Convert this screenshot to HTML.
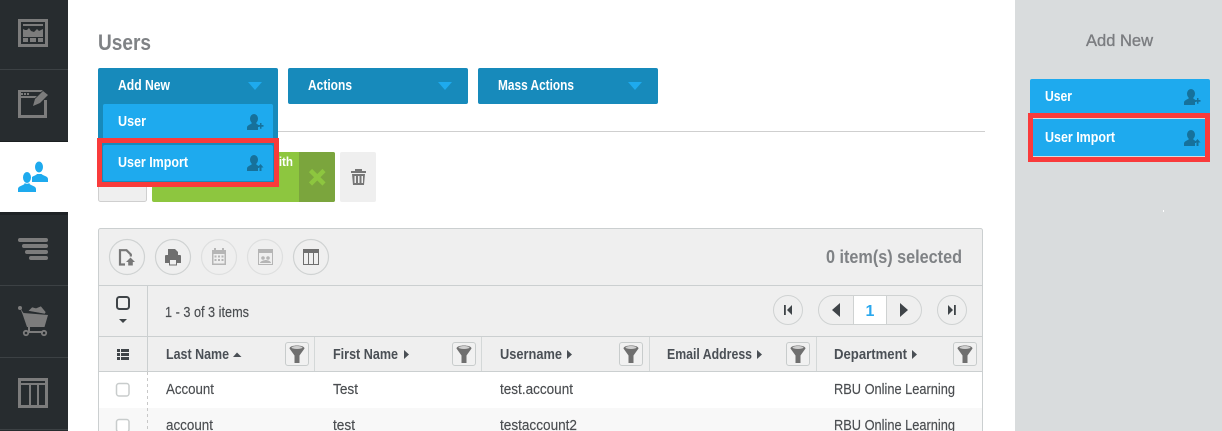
<!DOCTYPE html>
<html><head><meta charset="utf-8"><title>Users</title>
<style>
html,body{margin:0;padding:0;width:1222px;height:431px;overflow:hidden;background:#fff}
svg{display:block}
text{font-family:"Liberation Sans",sans-serif}
.b{font-weight:bold}
.w{fill:#fff;font-weight:bold;font-size:15px}
.h{fill:#4a4f55;font-weight:bold;font-size:14.5px}
.c{fill:#4a4d50;font-size:14.5px;stroke:#4a4d50;stroke-width:.15px}
</style></head><body>
<svg width="1222" height="431" viewBox="0 0 1222 431" xmlns="http://www.w3.org/2000/svg">
<defs>
<g id="p"><ellipse cx="7" cy="4.800" rx="4" ry="4.800"/><path d="M0 16v-2.500c0-2.500 4-3 5-4.500h4c.6 1 2 1.600 3 2.200v1.800h-1v3z"/></g>
<g id="f"><rect x=".5" y=".5" width="23" height="23" rx="2.500" fill="#f1f1f1" stroke="#c8cccc"/><path d="M4.500 6.500c0-4 15-4 15 0l-5 7v7.500h-5v-7.500z" fill="#6f6f6f"/><ellipse cx="12" cy="5.500" rx="5.500" ry="1.500" fill="#cfcfcf"/></g>
</defs>

<!-- sidebar -->
<rect width="68" height="431" fill="#272c2f"/>
<rect y="69" width="68" height="1" fill="#3c4144"/><rect y="141" width="68" height="1" fill="#1b1f21"/>
<rect y="142" width="68" height="70" fill="#fff"/>
<rect y="212" width="68" height="3" fill="#1f2326"/>
<rect y="285" width="68" height="1" fill="#3c4144"/><rect y="357" width="68" height="1" fill="#3c4144"/><rect y="429" width="68" height="1" fill="#3c4144"/>
<g fill="#7c7c7c">
<path fill-rule="evenodd" d="M18 19h30v28H18zM21 22v22h24V22z"/>
<rect x="23" y="24" width="20" height="2"/>
<path d="M23 37v-8l2 1 2 0 2-2 2 3 3 1 3-3 2 2 2-1 2-1v8z"/>
<rect x="23" y="38" width="5" height="4"/><rect x="30" y="38" width="6" height="4"/><rect x="38" y="38" width="5" height="4"/>
<!-- window + pencil -->
<path fill-rule="evenodd" d="M18 90h25v2H21v4h23v2H21v17h23v-15h3v18H18z"/>
<rect x="21" y="93" width="2" height="2"/><rect x="24" y="93" width="2" height="2"/><rect x="27" y="93" width="2" height="2"/>
<path d="M33 106l2-7 8-8 5 4-8 8z" stroke="#272c2f" stroke-width="1.500" paint-order="stroke"/>
<rect x="18" y="238" width="30" height="4" rx="2"/><rect x="22" y="244" width="26" height="4" rx="2"/><rect x="25" y="250" width="23" height="4" rx="2"/><rect x="29" y="256" width="19" height="4" rx="2"/>
<!-- cart -->
<circle cx="20" cy="308" r="2"/>
<path d="M20 308l3.500 5 24.500 2-3.500 12H27l-4.500-13z"/>
<path d="M28 311l4-4 4 1 5-2 5 6-1 2z" stroke="#272c2f" stroke-width=".6"/>
<rect x="28" y="327" width="2" height="5"/><rect x="28" y="331" width="15" height="2"/>
<circle cx="26" cy="333" r="2.200" fill="none" stroke="#7c7c7c" stroke-width="1.800"/><circle cx="44" cy="333" r="2.200" fill="none" stroke="#7c7c7c" stroke-width="1.800"/>
<!-- columns -->
<path fill-rule="evenodd" d="M18 378h30v30H18zM21 385v20h8v-20zM31 385v20h6v-20zM39 385v20h6v-20z"/>
<rect x="21" y="381" width="24" height="2" fill="#272c2f"/>
</g>
<g fill="#1eaaee">
<ellipse cx="39" cy="167" rx="4" ry="5.500"/>
<path d="M32 182v-5c1.500-1.200 4-1.600 5-3h4.500c1 1.500 6.500 2 6.500 5v3z"/>
<path d="M18 192v-3c0-3 5-3.500 6.500-5v-2h5v2c1.500 1.500 6.500 2 6.500 5v3z" stroke="#fff" stroke-width="1.500" paint-order="stroke"/>
<ellipse cx="27" cy="177.500" rx="4" ry="5.500" stroke="#fff" stroke-width="1.500" paint-order="stroke"/>
</g>

<!-- heading + buttons -->
<text x="98" y="50" class="b" font-size="22" fill="#7f8285" textLength="53" lengthAdjust="spacingAndGlyphs">Users</text>
<rect x="98" y="131" width="887" height="1" fill="#cfcfcf"/>
<rect x="288" y="68" width="180" height="36" rx="2" fill="#178abb"/>
<rect x="478" y="68" width="180" height="36" rx="2" fill="#178abb"/>
<text x="308" y="90" class="w" textLength="44" lengthAdjust="spacingAndGlyphs">Actions</text>
<text x="498" y="90" class="w" textLength="76" lengthAdjust="spacingAndGlyphs">Mass Actions</text>
<path d="M438 82h14l-7 8zM628 82h14l-7 8z" fill="#1eaaee"/>

<!-- filter chip behind -->
<rect x="98.500" y="160" width="48" height="41.500" rx="2" fill="#efefef" stroke="#cfcfcf"/>
<rect x="152" y="152" width="183" height="50" rx="2" fill="#8dc63f"/>
<path d="M299 152h34a2 2 0 0 1 2 2v46a2 2 0 0 1-2 2h-34z" fill="#7ba53d"/>
<text x="268" y="166" fill="#fff" class="b" font-size="13" textLength="25" lengthAdjust="spacingAndGlyphs">With</text>
<path d="M310.500 170.500l13.500 13.500M324 170.500L310.500 184" stroke="#8dc63f" stroke-width="4.500" fill="none"/>
<rect x="340" y="152" width="36" height="50" rx="2" fill="#efefef"/>
<g fill="#777"><rect x="351" y="171" width="15" height="2"/><rect x="355" y="169" width="7" height="2"/><path d="M352 174h13l-1 11h-11zM354.500 176v7h1.500v-7zM358 176v7h1.500v-7zM361.500 176v7h1.500v-7z" fill-rule="evenodd"/></g>

<!-- dropdown -->
<path d="M100 68h176a2 2 0 0 1 2 2v116H98V70a2 2 0 0 1 2-2z" fill="#178abb"/>
<text x="118" y="90" class="w" textLength="52" lengthAdjust="spacingAndGlyphs">Add New</text>
<path d="M248 82h14l-7 8z" fill="#1eaaee"/>
<rect x="103" y="104" width="170" height="36" rx="2" fill="#1eaaee"/>
<text x="118" y="126" class="w" textLength="28" lengthAdjust="spacingAndGlyphs">User</text>
<use href="#p" x="247" y="114" fill="#16719b"/>
<path d="M258 125h2v-2h1.500v2h2v1.700h-2v2h-1.500v-2h-2z" fill="#16719b"/>
<rect x="99.500" y="140.500" width="177" height="44" fill="#178abb" stroke="#f93b3b" stroke-width="5"/>
<rect x="103" y="145" width="170" height="36" rx="2" fill="#1eaaee"/>
<text x="118" y="167" class="w" textLength="70" lengthAdjust="spacingAndGlyphs">User Import</text>
<use href="#p" x="247" y="155" fill="#16719b"/>
<path d="M260.500 164l3 3.500h-2v3.500h-2v-3.500h-2z" fill="#16719b"/>

<!-- right panel -->
<rect x="1015" width="207" height="431" fill="#d9dcdd"/>
<text x="1086" y="46" font-size="16.500" fill="#7b7d80" stroke="#7b7d80" stroke-width=".35" textLength="67" lengthAdjust="spacingAndGlyphs">Add New</text>
<path d="M1032 79h176a2 2 0 0 1 2 2v34h-180V81a2 2 0 0 1 2-2z" fill="#1eaaee"/>
<text x="1045" y="101" class="w" textLength="27" lengthAdjust="spacingAndGlyphs">User</text>
<use href="#p" x="1184" y="89" fill="#16719b"/>
<path d="M1195 100h2v-2h1.500v2h2v1.700h-2v2h-1.500v-2h-2z" fill="#16719b"/>
<rect x="1030.500" y="115.500" width="177" height="44" fill="#d9dcdd" stroke="#f93b3b" stroke-width="5"/>
<rect x="1033" y="119" width="172" height="37" fill="#1eaaee"/>
<text x="1045" y="142" class="w" textLength="70" lengthAdjust="spacingAndGlyphs">User Import</text>
<use href="#p" x="1184" y="130" fill="#16719b"/>
<path d="M1197.500 139l3 3.500h-2v3.500h-2v-3.500h-2z" fill="#16719b"/>
<rect x="1163" y="210" width="1" height="2" fill="#fff"/>

<!-- table -->
<path d="M100.500 228.500h880a2 2 0 0 1 2 2V431h-884V230.500a2 2 0 0 1 2-2z" fill="#efefef" stroke="#cbcfd0"/>
<rect x="99" y="372" width="883" height="36" fill="#fff"/>
<rect x="99" y="408" width="883" height="23" fill="#f8f8f8"/>
<rect x="99" y="285" width="883" height="1" fill="#cbcfd0"/>
<rect x="99" y="336" width="883" height="1" fill="#cbcfd0"/>
<rect x="99" y="371" width="883" height="1" fill="#cbcfd0"/>
<rect x="147" y="285" width="1" height="86" fill="#cbcfd0"/>
<path d="M147.500 372V431" stroke="#c8c8c8" stroke-dasharray="3 3" fill="none"/>
<g fill="#d4d8d8"><rect x="314" y="337" width="1" height="34"/><rect x="481" y="337" width="1" height="34"/><rect x="649" y="337" width="1" height="34"/><rect x="816" y="337" width="1" height="34"/></g>

<!-- toolbar -->
<g fill="none" stroke="#cfd2d2" stroke-width="1.200">
<circle cx="127" cy="257" r="17.500"/><circle cx="173" cy="257" r="17.500"/><circle cx="311" cy="257" r="17.500"/>
</g>
<g fill="none" stroke="#dedfdf" stroke-width="1.200"><circle cx="219" cy="257" r="17.500"/><circle cx="265" cy="257" r="17.500"/></g>
<path d="M125 264.500h-5V250.200h6.500l4.300 4.300v2" fill="none" stroke="#777" stroke-width="2.200"/><path d="M130.500 257.500l4.500 4.500h-2.200v3.500h-4.600V262H126z" fill="#777"/>
<g fill="#6f6f6f"><path d="M168 249h7l3 3v4h-10z"/><path d="M166 255h14a1 1 0 0 1 1 1v7h-16v-7a1 1 0 0 1 1-1z"/></g>
<rect x="169.500" y="259.500" width="7" height="5.500" fill="#efefef" stroke="#6f6f6f"/>
<g fill="#b5b5b5"><path fill-rule="evenodd" d="M212 250h14v15h-14zM213.500 254v9.500h11V254z"/><rect x="214" y="248" width="2" height="3"/><rect x="222" y="248" width="2" height="3"/><rect x="214.500" y="255.500" width="2" height="2"/><rect x="218" y="255.500" width="2" height="2"/><rect x="221.500" y="255.500" width="2" height="2"/><rect x="214.500" y="259" width="2" height="2"/><rect x="218" y="259" width="2" height="2"/><rect x="221.500" y="259" width="2" height="2"/></g>
<g fill="#b5b5b5"><path fill-rule="evenodd" d="M258 249h15v16h-15zM259 253v11h13v-11z"/><circle cx="263" cy="258" r="1.800"/><circle cx="268" cy="258" r="1.800"/><path d="M260 263c0-2 5-3 6-3s5 1 5 3z"/></g>
<g fill="#6f6f6f"><path fill-rule="evenodd" d="M303 249h16v16h-16zM304 253v11h4v-11zM309 253v11h4v-11zM314 253v11h4v-11z"/></g>
<text x="826" y="263" class="b" font-size="18" fill="#7f8285" textLength="136" lengthAdjust="spacingAndGlyphs">0 item(s) selected</text>

<!-- pager row -->
<rect x="117" y="297" width="12" height="12" rx="2.500" fill="none" stroke="#3f4448" stroke-width="2"/>
<path d="M119 319h8l-4 4z" fill="#3f4448"/>
<text x="165" y="317" font-size="14.500" fill="#4a4d50" stroke="#4a4d50" stroke-width=".15" textLength="84" lengthAdjust="spacingAndGlyphs">1 - 3 of 3 items</text>
<circle cx="788" cy="310" r="14.500" fill="none" stroke="#cfd2d2"/>
<rect x="784" y="305" width="1.800" height="10" fill="#3f4448"/><path d="M792 305v10l-5-5z" fill="#3f4448"/>
<rect x="818.500" y="295.500" width="103" height="29" rx="14.500" fill="#efefef" stroke="#cfd2d2"/>
<rect x="854" y="296" width="32" height="28" fill="#fff"/>
<rect x="853" y="296" width="1" height="28" fill="#cfd2d2"/><rect x="886" y="296" width="1" height="28" fill="#cfd2d2"/>
<path d="M840 303v14l-8-7zM900 303v14l8-7z" fill="#3f4448"/>
<text x="870" y="316" text-anchor="middle" class="b" font-size="16" fill="#2aa8ee">1</text>
<circle cx="952" cy="310" r="14.500" fill="none" stroke="#cfd2d2"/>
<path d="M948 305v10l5-5z" fill="#3f4448"/><rect x="954" y="305" width="1.800" height="10" fill="#3f4448"/>

<!-- header row -->
<g fill="#3f4448"><rect x="117" y="349" width="3" height="3"/><rect x="121" y="349" width="8" height="3"/><rect x="117" y="353" width="3" height="3"/><rect x="121" y="353" width="8" height="3"/><rect x="117" y="357" width="3" height="3"/><rect x="121" y="357" width="8" height="3"/></g>
<text x="166" y="359" class="h" textLength="63" lengthAdjust="spacingAndGlyphs">Last Name</text><path d="M233 357l4-4.500 4.500 4.500z" fill="#4a4f55"/>
<text x="333" y="359" class="h" textLength="65" lengthAdjust="spacingAndGlyphs">First Name</text><path d="M404 350v9l5-4.500z" fill="#4a4f55"/>
<text x="500" y="359" class="h" textLength="62" lengthAdjust="spacingAndGlyphs">Username</text><path d="M567 350v9l5-4.500z" fill="#4a4f55"/>
<text x="667" y="359" class="h" textLength="85" lengthAdjust="spacingAndGlyphs">Email Address</text><path d="M757 350v9l5-4.500z" fill="#4a4f55"/>
<text x="834" y="359" class="h" textLength="73" lengthAdjust="spacingAndGlyphs">Department</text><path d="M912 350v9l5-4.500z" fill="#4a4f55"/>
<use href="#f" x="285" y="342"/><use href="#f" x="452" y="342"/><use href="#f" x="619" y="342"/><use href="#f" x="786" y="342"/><use href="#f" x="953" y="342"/>

<!-- rows -->
<rect x="116.500" y="383.500" width="12.500" height="12.500" rx="2.500" fill="#fff" stroke="#c8cccc" stroke-width="1.500"/>
<rect x="116.500" y="419.500" width="12.500" height="12.500" rx="2.500" fill="#fff" stroke="#c8cccc" stroke-width="1.500"/>
<text x="166" y="394" class="c" textLength="48" lengthAdjust="spacingAndGlyphs">Account</text>
<text x="333" y="394" class="c" textLength="25" lengthAdjust="spacingAndGlyphs">Test</text>
<text x="500" y="394" class="c" textLength="73" lengthAdjust="spacingAndGlyphs">test.account</text>
<text x="834" y="394" class="c" textLength="121" lengthAdjust="spacingAndGlyphs">RBU Online Learning</text>
<text x="166" y="430" class="c" textLength="47" lengthAdjust="spacingAndGlyphs">account</text>
<text x="333" y="430" class="c" textLength="22" lengthAdjust="spacingAndGlyphs">test</text>
<text x="500" y="430" class="c" textLength="77" lengthAdjust="spacingAndGlyphs">testaccount2</text>
<text x="834" y="430" class="c" textLength="121" lengthAdjust="spacingAndGlyphs">RBU Online Learning</text>
</svg>
</body></html>
